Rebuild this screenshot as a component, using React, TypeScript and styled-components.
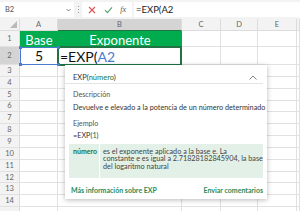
import React from 'react';
import styled, { createGlobalStyle } from 'styled-components';

const Global = createGlobalStyle`
  html, body { margin: 0; padding: 0; background: #fff; }
  * { box-sizing: border-box; }
`;

const Root = styled.div`
  position: relative;
  width: 300px;
  height: 211px;
  overflow: hidden;
  background: #fff;
  font-family: Lato, "Noto Sans", sans-serif;
`;

/* ---------- formula bar ---------- */
const TopBar = styled.div`
  height: 19px;
  background: #f3f3f3;
  display: flex;
  align-items: flex-start;
  padding-top: 2px;
`;

const NameBox = styled.div`
  width: 74px;
  height: 15px;
  background: #fff;
  display: flex;
  align-items: center;
  justify-content: space-between;
  padding: 0 3px 0 5px;
  font-size: 7.5px;
  color: #555;
`;

const Handle = styled.div`
  width: 8px;
  height: 15px;
  display: flex;
  flex-direction: column;
  align-items: center;
  justify-content: center;
  gap: 2px;
  & > span {
    width: 1px;
    height: 1px;
    background: #9a9a9a;
  }
`;

const Buttons = styled.div`
  width: 50px;
  height: 15px;
  background: #fff;
  display: flex;
  align-items: center;
  justify-content: space-around;
  padding: 0 2px;
`;

const Fx = styled.span`
  font-family: "Liberation Serif", serif;
  font-style: italic;
  font-size: 8px;
  color: #555;
`;

const FormulaBox = styled.div`
  flex: 1;
  margin-left: 2px;
  height: 15px;
  background: #fff;
  display: flex;
  align-items: center;
  padding-left: 2px;
  font-size: 9.5px;
  color: #222;
`;

/* ---------- sheet ---------- */
const Sheet = styled.div`
  display: grid;
  grid-template-columns: 20px 38px 124px 39px 37px 39px 3px;
  grid-template-rows: 12px 16px 18px repeat(13, 11.85px);
`;

const Corner = styled.div`
  background: #f3f3f3;
  border-right: 1px solid #dcdcdc;
  border-bottom: 1px solid #dcdcdc;
  position: relative;
  &::after {
    content: '';
    position: absolute;
    right: 2px;
    bottom: 2px;
    width: 0;
    height: 0;
    border-left: 7px solid transparent;
    border-bottom: 7px solid #b9b9b9;
  }
`;

const ColHead = styled.div<{ $sel?: boolean }>`
  background: ${(p) => (p.$sel ? '#d4d4d4' : '#f3f3f3')};
  border-right: 1px solid #dcdcdc;
  border-bottom: ${(p) => (p.$sel ? '1px solid #217346' : '1px solid #dcdcdc')};
  color: #666;
  font-size: 7.5px;
  display: flex;
  align-items: center;
  justify-content: center;
`;

const RowHead = styled.div<{ $sel?: boolean }>`
  background: ${(p) => (p.$sel ? '#d4d4d4' : '#f3f3f3')};
  border-right: 1px solid #dcdcdc;
  border-bottom: 1px solid #e1e1e1;
  color: #666;
  font-size: 7.5px;
  display: flex;
  align-items: center;
  justify-content: center;
`;

const Cell = styled.div`
  border-right: 1px solid #e1e1e1;
  border-bottom: 1px solid #e1e1e1;
`;

const HeaderCell = styled.div`
  background: #00ac4e;
  color: #fff;
  font-size: 13px;
  display: flex;
  align-items: center;
  justify-content: center;
  padding-top: 1px;
`;

const RefCell = styled.div`
  position: relative;
  display: flex;
  align-items: center;
  justify-content: center;
  font-size: 14px;
  color: #111;
  border-bottom: 1px solid #e1e1e1;
  &::after {
    content: '';
    position: absolute;
    left: 0;
    top: 0;
    right: -1px;
    bottom: -1px;
    border: 1px solid #4a7bd0;
  }
`;

const Dot = styled.span<{ $pos: string }>`
  position: absolute;
  width: 3px;
  height: 3px;
  background: #4a7bd0;
  z-index: 2;
  ${(p) => p.$pos}
`;

const ActiveCell = styled.div`
  position: relative;
  display: flex;
  align-items: center;
  font-size: 14px;
  color: #111;
  padding-left: 2px;
  &::after {
    content: '';
    position: absolute;
    left: -1px;
    top: -1px;
    right: 0;
    bottom: -1px;
    border: 2px solid #217346;
  }
`;

const Blue = styled.span`
  color: #4a7bd0;
`;

/* ---------- tooltip ---------- */
const Panel = styled.div`
  position: absolute;
  left: 65px;
  top: 65px;
  width: 202px;
  height: 134px;
  background: #fff;
  box-shadow: 0 1px 5px rgba(0, 0, 0, 0.28);
  font-family: Lato, "Noto Sans", sans-serif;
  color: #333;
  z-index: 5;
`;

const TitleRow = styled.div`
  display: flex;
  align-items: center;
  justify-content: space-between;
  height: 19px;
  padding: 6px 6px 0 8px;
  font-size: 7.5px;
  border-bottom: 1px solid #e4e4e4;
  margin-right: 4px;
`;

const Green = styled.span`
  color: #217346;
`;

const Label = styled.div<{ $mt: number }>`
  margin-top: ${(p) => p.$mt}px;
  padding-left: 8px;
  height: 9px;
  line-height: 9px;
  font-size: 7.2px;
  color: #555;
`;

const Text = styled.div<{ $mt: number }>`
  margin-top: ${(p) => p.$mt}px;
  padding-left: 8px;
  height: 9px;
  line-height: 9px;
  font-size: 7.25px;
  color: #333;
  white-space: nowrap;
`;

const ArgTable = styled.div`
  margin: 4px 4px 0 4px;
  height: 34px;
  background: #e2f0e7;
  display: grid;
  grid-template-columns: 31px 1fr;
`;

const ArgName = styled.div`
  color: #217346;
  font-size: 7px;
  font-weight: 700;
  padding: 4px 0 0 4px;
  line-height: 7.7px;
  border-right: 1px solid #fff;
`;

const ArgDesc = styled.div`
  font-size: 7.25px;
  line-height: 7.7px;
  padding: 4px 1px 0 3px;
  color: #444;
  white-space: nowrap;
`;

const Footer = styled.div`
  margin-top: 8px;
  display: flex;
  justify-content: space-between;
  padding: 0 4px 0 6px;
  height: 9px;
  line-height: 9px;
  font-size: 7px;
  font-weight: 700;
  color: #2e8b57;
`;

const rows = Array.from({ length: 12 }, (_, i) => i + 3);

export default function App() {
  return (
    <Root>
      <Global />
      <TopBar>
        <NameBox>
          <span>B2</span>
          <svg width="5" height="4" viewBox="0 0 5 4">
            <path d="M0.5 1 L2.5 3 L4.5 1" fill="none" stroke="#777" strokeWidth="0.9" />
          </svg>
        </NameBox>
        <Handle>
          <span />
          <span />
          <span />
        </Handle>
        <Buttons>
          <svg width="8" height="8" viewBox="0 0 8 8">
            <path d="M1 1 L7 7 M7 1 L1 7" stroke="#e05252" strokeWidth="1.1" />
          </svg>
          <svg width="9" height="8" viewBox="0 0 9 8">
            <path d="M1 4.2 L3.4 6.6 L8 1.4" fill="none" stroke="#4fa36b" strokeWidth="1.1" />
          </svg>
          <Fx>fx</Fx>
        </Buttons>
        <FormulaBox>=EXP(A2</FormulaBox>
      </TopBar>

      <Sheet>
        <Corner />
        <ColHead>A</ColHead>
        <ColHead $sel>B</ColHead>
        <ColHead>C</ColHead>
        <ColHead>D</ColHead>
        <ColHead>E</ColHead>
        <ColHead />

        <RowHead>1</RowHead>
        <HeaderCell>Base</HeaderCell>
        <HeaderCell>Exponente</HeaderCell>
        <Cell />
        <Cell />
        <Cell />
        <Cell />

        <RowHead $sel>2</RowHead>
        <RefCell>
          5
          <Dot $pos="left:-1px;top:-1px;" />
          <Dot $pos="right:-2px;top:-1px;" />
          <Dot $pos="left:-1px;bottom:-2px;" />
          <Dot $pos="right:-2px;bottom:-2px;" />
        </RefCell>
        <ActiveCell>
          =EXP(<Blue>A2</Blue>
        </ActiveCell>
        <Cell />
        <Cell />
        <Cell />
        <Cell />

        {rows.map((r) => (
          <React.Fragment key={r}>
            <RowHead>{r}</RowHead>
            <Cell />
            <Cell />
            <Cell />
            <Cell />
            <Cell />
            <Cell />
          </React.Fragment>
        ))}
        <RowHead />
        <Cell />
        <Cell />
        <Cell />
        <Cell />
        <Cell />
        <Cell />
      </Sheet>

      <Panel>
        <TitleRow>
          <span>
            EXP(<Green>número</Green>)
          </span>
          <svg width="8" height="5" viewBox="0 0 8 5">
            <path d="M0.5 4.5 L4 1 L7.5 4.5" fill="none" stroke="#777" strokeWidth="0.9" />
          </svg>
        </TitleRow>
        <Label $mt={6}>Descripción</Label>
        <Text $mt={4}>Devuelve e elevado a la potencia de un número determinado</Text>
        <Label $mt={6.5}>Ejemplo</Label>
        <Text $mt={3}>
          =EXP(<Green>1</Green>)
        </Text>
        <ArgTable>
          <ArgName>número</ArgName>
          <ArgDesc>
            es el exponente aplicado a la base e. La
            <br />
            constante e es igual a 2.71828182845904, la base
            <br />
            del logaritmo natural
          </ArgDesc>
        </ArgTable>
        <Footer>
          <span>Más información sobre EXP</span>
          <span>Enviar comentarios</span>
        </Footer>
      </Panel>
    </Root>
  );
}
